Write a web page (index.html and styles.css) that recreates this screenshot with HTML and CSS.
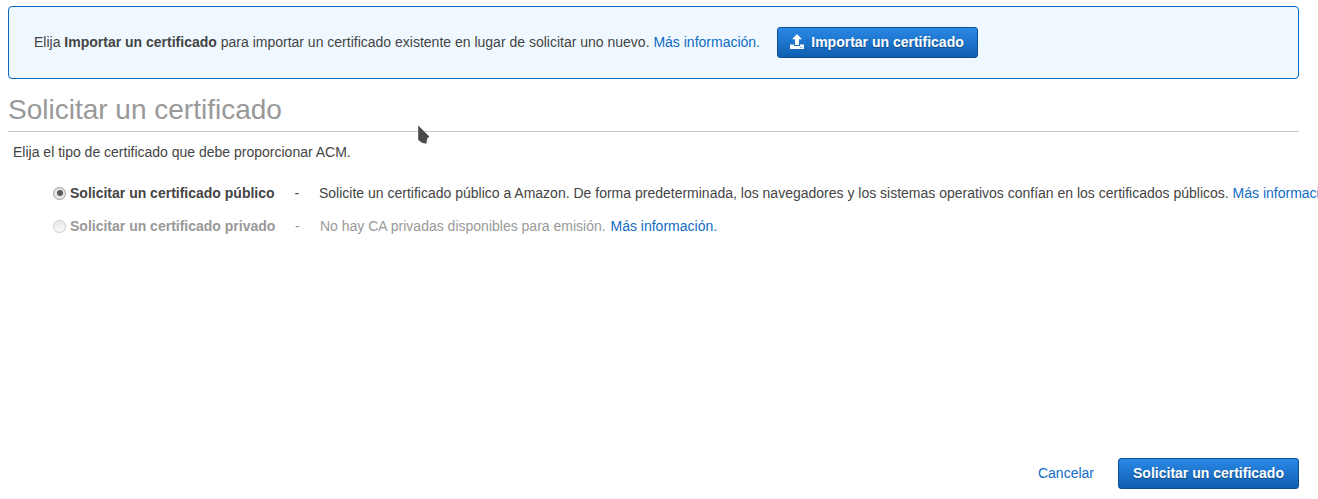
FILE: index.html
```html
<!DOCTYPE html>
<html lang="es">
<head>
<meta charset="utf-8">
<title>Solicitar un certificado</title>
<link rel="stylesheet" href="styles.css">
</head>
<body>
<div class="page">
  <div class="alert">
    <span class="alert-text">Elija <b>Importar un certificado</b> para importar un certificado existente en lugar de solicitar uno nuevo. <a href="#">Más información.</a></span>
    <button class="btn btn-import" type="button">
      <svg class="btn-icon" viewBox="0 0 16 16" width="16" height="16" aria-hidden="true">
        <path fill="#fff" d="M8 0 13 5.2H10V11H6V5.2H3Z"/>
        <path fill="#fff" fill-rule="evenodd" d="M1 10.5H5V12H11V10.5H15V15H1ZM11 12.8v1h.8v-1ZM12.8 12.8v1h.8v-1Z"/>
      </svg>
      Importar un certificado
    </button>
  </div>
  <h1 class="title">Solicitar un certificado</h1>
  <p class="intro">Elija el tipo de certificado que debe proporcionar ACM.</p>
  <div class="options">
    <div class="option">
      <span class="radio radio-on"></span>
      <b class="opt-name">Solicitar un certificado público</b>
      <span class="dash">-</span>
      <span class="opt-desc">Solicite un certificado público a Amazon. De forma predeterminada, los navegadores y los sistemas operativos confían en los certificados públicos. <a href="#">Más información.</a></span>
    </div>
    <div class="option option-off">
      <span class="radio"></span>
      <b class="opt-name">Solicitar un certificado privado</b>
      <span class="dash dash-off">-</span>
      <span class="opt-desc">No hay CA privadas disponibles para emisión. <a class="gap" href="#">Más información.</a></span>
    </div>
  </div>
  <div class="actions">
    <a class="cancel" href="#">Cancelar</a>
    <button class="btn btn-submit" type="button">Solicitar un certificado</button>
  </div>
</div>
<svg class="cursor" viewBox="0 0 14 22" width="14" height="22" aria-hidden="true">
  <path fill="#4a4a4a" stroke="#fff" stroke-opacity=".55" stroke-width=".8" d="M1 1 12.5 12.5 10.5 14.5 9.5 20 5 19 1 16Z"/>
</svg>
</body>
</html>
```
FILE: styles.css
```css
html, body {
  margin: 0;
  padding: 0;
  background: #fff;
  height: 499px;
  overflow: hidden;
}
body {
  font-family: "Liberation Sans", Arial, sans-serif;
  font-size: 14px;
  line-height: 20px;
  color: #444;
  position: relative;
}
a {
  color: #0f6cc4;
  text-decoration: none;
}
.page {
  width: 1291px;
  margin-left: 8px;
  padding-top: 6px;
  display: flex;
  flex-direction: column;
  height: 493px;
  box-sizing: content-box;
}
.alert {
  box-sizing: border-box;
  height: 73px;
  border: 1px solid #0a6ac1;
  border-radius: 4px;
  background: #f0f8ff;
  padding-left: 25px;
  display: flex;
  align-items: center;
  flex: none;
}
.alert-text {
  white-space: nowrap;
  margin-bottom: 2px;
}
.btn {
  box-sizing: border-box;
  height: 31px;
  border: 1px solid #0d4f94;
  border-radius: 3px;
  background: linear-gradient(#2a88e6, #0f5fb0);
  color: #fff;
  font: bold 14px/20px "Liberation Sans", Arial, sans-serif;
  text-shadow: 0 1px 1px rgba(0, 0, 0, .35);
  padding: 0 0 2px;
  display: inline-flex;
  align-items: center;
  justify-content: center;
  white-space: nowrap;
  flex: none;
}
.btn-import {
  width: 201px;
  margin-left: 17px;
  padding-right: 2px;
}
.btn-icon {
  margin-right: 6px;
}
.btn-submit {
  width: 181px;
}
.title {
  margin: 15px 0 0;
  height: 37px;
  border-bottom: 1px solid #c8c8c8;
  font-size: 28px;
  line-height: 32px;
  font-weight: 400;
  color: #999;
  flex: none;
}
.intro {
  margin: 10px 0 0 5px;
  flex: none;
}
.options {
  margin: 21px 0 0 45px;
  display: flex;
  flex-direction: column;
  gap: 13px;
  flex: none;
}
.option {
  display: flex;
  align-items: center;
  white-space: nowrap;
}
.option-off,
.option-off .opt-name {
  color: #999;
}
.opt-name {
  width: 225px;
  flex: none;
  color: #444;
}
.dash {
  width: 24px;
  flex: none;
  margin-left: -0.5px;
  padding-right: 0.5px;
}
.dash-off {
  margin-left: 0;
  padding-right: 1px;
}
.opt-desc a.gap {
  margin-left: 1px;
}
.radio {
  box-sizing: border-box;
  width: 13px;
  height: 13px;
  margin-right: 4px;
  border-radius: 50%;
  border: 1px solid #cfcfcf;
  background: linear-gradient(#eaeaea, #f8f8f8);
  box-shadow: 0 0 1px rgba(0, 0, 0, .15);
  flex: none;
  display: flex;
  align-items: center;
  justify-content: center;
}
.radio-on {
  border-color: #a8a8a8;
  background: #e4e4e4;
}
.radio-on::after {
  content: "";
  width: 6px;
  height: 6px;
  border-radius: 50%;
  background: #5c5c5c;
}
.actions {
  margin-top: auto;
  margin-bottom: 10px;
  display: flex;
  justify-content: flex-end;
  align-items: center;
  gap: 24px;
}
.cancel {
  margin-bottom: 2px;
}
.cursor {
  position: absolute;
  left: 417px;
  top: 124px;
}
```
